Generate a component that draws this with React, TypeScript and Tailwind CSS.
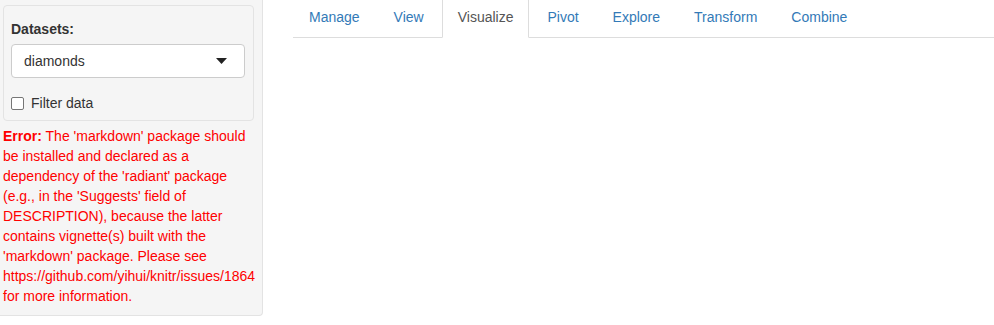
const tabs = ["Manage", "View", "Visualize", "Pivot", "Explore", "Transform", "Combine"];

const Sidebar = () => {
  return (
    <div className="w-[263px] shrink-0 h-[316px] bg-[#f5f5f5] border-r border-b border-[#e3e3e3] rounded-br-[4px] pl-[3px]">
      <div className="mt-[5px] w-[251px] border border-[#e3e3e3] rounded-[4px] px-[7px] pt-[13px] pb-[7px]">
        <div className="text-[14px] leading-[20px] font-bold text-[#333] mb-[5px]">Datasets:</div>
        <div className="h-[34px] w-[234px] bg-white border border-[#cccccc] rounded-[4px] flex items-center justify-between pl-[12px] pr-[17px] text-[14px] text-[#333]">
          <span>diamonds</span>
          <svg width="11" height="6" viewBox="0 0 11 6">
            <path d="M0 0 L11 0 L5.5 6 Z" fill="#222" />
          </svg>
        </div>
        <label className="flex items-center gap-[7px] mt-[15px] text-[14px] leading-[20px] text-[#333]">
          <span className="w-[13px] h-[13px] border border-[#767676] rounded-[2px] bg-white" />
          Filter data
        </label>
      </div>
      <div className="mt-[5px] w-[251px] text-[14px] leading-[20px] text-[#ff0000]">
        <b>Error:</b> The 'markdown' package should be installed and declared as a dependency of the 'radiant' package (e.g., in the 'Suggests' field of DESCRIPTION), because the latter contains vignette(s) built with the 'markdown' package. Please see https://github.com/yihui/knitr/issues/1864 for more information.
      </div>
    </div>
  );
};

const Tabs = () => {
  return (
    <div className="flex border-b border-[#dddddd] -mt-[3px] h-[41px]">
      {tabs.map((t) => (
        t === "Visualize" ? (
          <div
            key={t}
            className="mr-[2px] px-[15px] pt-[9px] pb-[11px] leading-[20px] text-[14px] text-[#555] bg-white border border-[#dddddd] border-b-transparent rounded-t-[4px] -mb-px h-[41px]">
            {t}
          </div>
        ) : (
          <div
            key={t}
            className="mr-[2px] px-[15px] pt-[9px] pb-[11px] leading-[20px] text-[14px] text-[#337ab7] border border-transparent">
            {t}
          </div>
        )
      ))}
    </div>
  );
};

export default function App() {
  return (
    <div className="w-[994px] h-[325px] bg-white flex overflow-hidden" style={{ fontFamily: '"Liberation Sans", Arial, sans-serif' }}>
      <Sidebar />
      <div className="ml-[30px] flex-1">
        <Tabs />
      </div>
    </div>
  );
}
